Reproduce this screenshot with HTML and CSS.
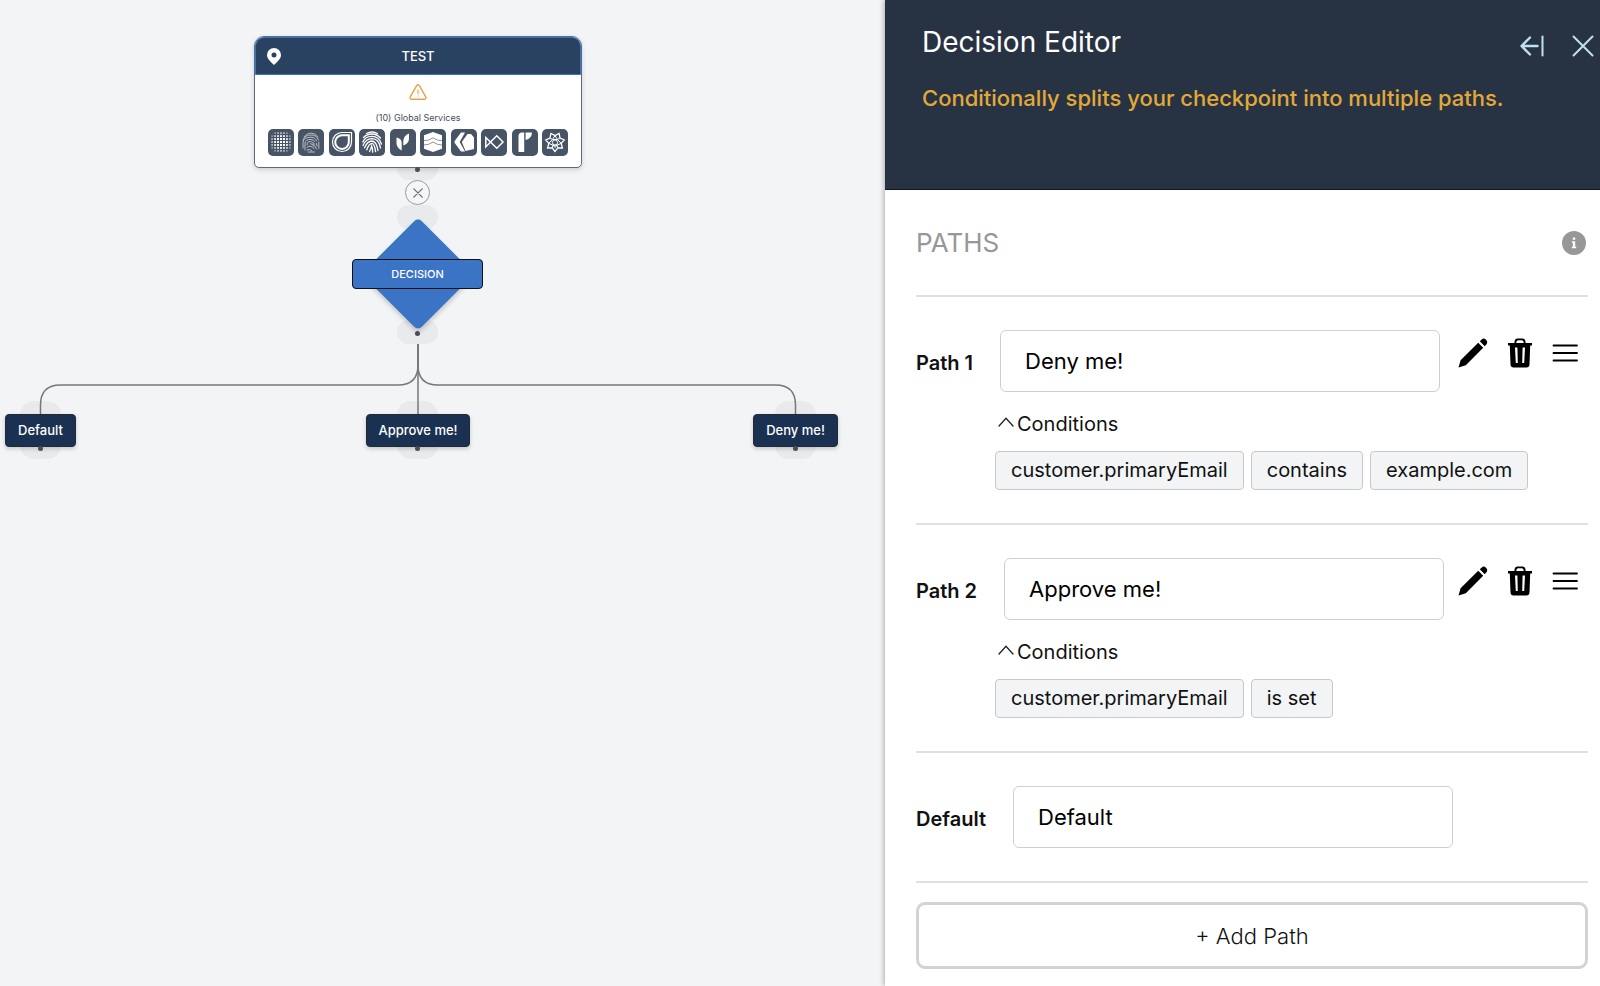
FILE: index.html
```html
<!DOCTYPE html>
<html lang="en">
<head>
<meta charset="utf-8">
<title>Decision Editor</title>
<link rel="stylesheet" href="styles.css">
</head>
<body>
<div class="app">
  <main class="canvas" aria-label="Flow">
    <span class="pad pad-out"></span>
    <span class="pad pad-in"></span>
    <span class="pad pad-split"></span>
    <span class="pad pad-tall pad-left"></span>
    <span class="pad pad-tall pad-mid"></span>
    <span class="pad pad-tall pad-right"></span>

    <svg class="edges" width="885" height="480" viewBox="0 0 885 480" aria-hidden="true">
      <g fill="none" stroke="#75777a" stroke-width="1.5">
        <path d="M418 344V414"/>
        <path d="M418 344V365Q418 385 398 385H60.500Q40.500 385 40.500 405V414"/>
        <path d="M418 344V365Q418 385 438 385H775.500Q795.500 385 795.500 405V414"/>
      </g>
    </svg>

    <section class="checkpoint">
      <header class="checkpoint-head">
        <svg class="pin" width="14" height="17" viewBox="0 0 14 17" aria-hidden="true"><path fill="#fff" fill-rule="evenodd" d="M7 0a7 7 0 0 1 7 7c0 4-4.500 7.500-7 10C4.500 14.500 0 11 0 7a7 7 0 0 1 7-7zm0 4.600a2.500 2.500 0 1 0 0 5 2.500 2.500 0 0 0 0-5z"/></svg>
        <h2 class="checkpoint-title">TEST</h2>
      </header>
      <div class="checkpoint-body">
        <svg width="18" height="16" viewBox="0 0 18 16" fill="none" stroke="#e9a04a" stroke-width="1.400" stroke-linejoin="round" stroke-linecap="round" aria-hidden="true"><path d="M7.800 1.400Q9 .1 10.200 1.400L16.900 13.200Q17.200 15 15.600 15.200H2.400Q.8 15 1.100 13.200Z"/><path d="M9 5.800V9.800M9 11.900V12.100" stroke-width="1.100"/></svg>
        <p class="services-label">(10) Global Services</p>
        <ul class="services">
          <li class="service"><svg viewBox="0 0 26 26"><defs><pattern id="dots" width="3" height="3" patternUnits="userSpaceOnUse" x="3" y="3"><rect width="2" height="2" fill="#fff"/></pattern><radialGradient id="fade"><stop offset=".4" stop-color="#fff"/><stop offset="1" stop-color="#fff" stop-opacity=".15"/></radialGradient><mask id="round"><circle cx="13" cy="13" r="12" fill="url(#fade)"/></mask></defs><rect x="3" y="3" width="20" height="20" fill="url(#dots)" mask="url(#round)"/></svg></li>
          <li class="service"><svg viewBox="0 0 26 26" fill="none" stroke="#c3c9d0" stroke-width=".9" stroke-linecap="round"><path d="M6 8Q9 4 13 4T20 8M5 11Q7 6 13 6T20.500 11M5 19V13Q5.500 8.500 13 8.200Q18 8.500 18.500 12M7 21V14Q7.500 10.400 13 10.400Q16 10.500 16.500 12.500M9.200 16Q8.500 12.600 12.500 12.500Q14 12.600 16.800 15.200M9 18.500Q10 17 12 17.200T16 19.500M9 21Q11 19 14 22M14.500 15Q17 16 18.500 20M20.800 13V19.500M18.500 14.500L19 17M10 23H16.500M12.200 14.500Q13.800 14.700 16 17.200"/></svg></li>
          <li class="service"><svg viewBox="0 0 26 26" fill="none" stroke="#fff"><path stroke-width="1.200" d="M22.500 3.500H13A9.500 9.500 0 1 0 22.500 13Z"/><path stroke-width="2" d="M19.800 6.300H13.200A6.800 6.800 0 1 0 19.800 13Z"/></svg></li>
          <li class="service"><svg viewBox="0 0 26 26" fill="none" stroke="#fff" stroke-width="1.300" stroke-linecap="round"><path d="M7.500 4.500Q13 1.500 18.500 4.500M4.500 8.500Q8 5 13 5T21.500 9M3.800 13Q6 7.300 13 7.300T22.500 15M4 16.500Q7 9.700 13 9.700Q20 9.900 21.500 19M5.500 18.800Q8.500 12 13 12Q17.500 12.300 19 21.500M7.800 20.800Q10 14.500 13 14.400Q15.600 14.800 16.600 22.700M10.500 22.500Q12 20 12.700 17Q13.800 19.500 13.600 23.200"/></svg></li>
          <li class="service"><svg viewBox="0 0 26 26" fill="#fff"><path d="M6.500 8.500Q11.500 9.500 11.700 13.500V21.500Q6.500 18.500 6.500 14ZM19 4.500V9.500Q19 14.500 13.300 16.500V12Q13.500 6.500 19 4.500Z"/></svg></li>
          <li class="service"><svg viewBox="0 0 26 26"><path fill="#fff" d="M13 3L22 6.200V19.800L13 23L4 19.800V6.200Z"/><path fill="none" stroke="#8c959f" stroke-width="1" d="M4 11.500Q9 12 13 8.800Q17 12 22 11.500M4 16Q9 16 13 13Q17 16 22 16"/></svg></li>
          <li class="service"><svg viewBox="0 0 26 26" fill="#fff"><path d="M10 3.500H14L8.700 13L14 22.500H10L3.500 13.800V12.200ZM16.500 5H20L23 8.500V20L14.500 22L10.800 13Z"/></svg></li>
          <li class="service"><svg viewBox="0 0 26 26" fill="none" stroke="#fff" stroke-width="1.500"><path d="M9.500 13L15.800 6.700L22 13L15.800 19.300ZM11.500 15L4.800 8.500V18L11.500 11"/></svg></li>
          <li class="service"><svg viewBox="0 0 26 26" fill="#fff"><path d="M6.500 23V7Q6.500 3.500 10 3.500H12.200V23ZM13.600 3.500H20Q20 9.500 13.600 11Z"/></svg></li>
          <li class="service"><svg viewBox="0 0 26 26" fill="none" stroke="#fff" stroke-width="1"><path stroke-width="1.300" d="M13.000 22.500L10.200 18.800L5.600 19.000L6.800 14.400L3.700 10.900L8.000 9.000L8.900 4.400L13.000 6.600L17.100 4.400L18.000 9.000L22.300 10.900L19.200 14.400L20.400 19.000L15.800 18.800Z"/><path d="M13 6.600L10.500 10.500L8 9M10.500 10.500L6.800 14.400L11 16.200L10.200 18.800M11 16.200L13 18.500L15 16.200L15.800 18.800M15 16.200L19.200 14.400L15.500 10.500L18 9M15.500 10.500L13 6.600M10.500 10.500H15.500M11 16.200H15"/><circle cx="13" cy="13.500" r="2.600"/></svg></li>
        </ul>
      </div>
    </section>
    <span class="dot dot-out"></span>
    <button class="remove" type="button" aria-label="Remove connection"><svg width="10" height="10" viewBox="0 0 10 10" stroke="#66686b" stroke-width="1.200" stroke-linecap="round"><path d="M.8 .8L9.200 9.200M9.200 .8L.8 9.200"/></svg></button>

    <span class="diamond"></span>
    <button class="decision" type="button">DECISION</button>
    <span class="dot dot-split"></span>

    <button class="branch branch-left" type="button">Default</button>
    <button class="branch branch-mid" type="button">Approve me!</button>
    <button class="branch branch-right" type="button">Deny me!</button>
    <span class="dot dot-left"></span>
    <span class="dot dot-mid"></span>
    <span class="dot dot-right"></span>
  </main>

  <aside class="panel">
    <header class="panel-head">
      <div class="panel-bar">
        <h1 class="panel-title">Decision Editor</h1>
        <div class="panel-actions">
          <button class="icon-btn" type="button" aria-label="Expand panel"><svg width="24" height="22" viewBox="0 0 24 22" fill="none" stroke="#bfe0f0" stroke-width="2.400" stroke-linecap="round" stroke-linejoin="round"><path d="M10 2.500L1.500 11L10 19.500M2 11H17.500"/><path d="M22.500 1.500V20.500" stroke-width="2"/></svg></button>
          <button class="icon-btn" type="button" aria-label="Close"><svg width="22" height="22" viewBox="0 0 22 22" stroke="#bfe0f0" stroke-width="2" stroke-linecap="round"><path d="M1.500 1.500L20.500 20.500M20.500 1.500L1.500 20.500"/></svg></button>
        </div>
      </div>
      <p class="panel-sub">Conditionally splits your checkpoint into multiple paths.</p>
    </header>

    <div class="panel-body">
      <div class="section-head">
        <h2 class="section-title">PATHS</h2>
        <button class="icon-btn" type="button" aria-label="About paths"><svg width="24" height="24" viewBox="0 0 24 24"><circle cx="12" cy="12" r="12" fill="#979797"/><path fill="#fff" d="M10.800 6.500H13.200V8.800H10.800ZM9.900 10.300H13.200V15.800H14.200V17.300H9.800V15.800H10.900V11.800H9.900Z"/></svg></button>
      </div>

      <section class="path">
        <div class="path-row">
          <label class="path-label" for="path1">Path 1</label>
          <input class="path-input" id="path1" type="text" value="Deny me!">
          <div class="path-tools">
            <button class="icon-btn" type="button" aria-label="Edit path 1"><svg width="30" height="30" viewBox="0 0 30 30"><path d="M.5 29.500L2.600 22.200L20.200 4.800L25.200 9.800L7.800 27.300ZM21.800 3.300L24 1.200Q26-.2 28 1.800T28.700 6L26.700 8.200Z"/></svg></button>
            <button class="icon-btn" type="button" aria-label="Delete path 1"><svg width="24" height="30" viewBox="0 0 24 30"><path fill-rule="evenodd" d="M6.500 5V3.500Q7 .5 9.500 .5H14.500Q17 .5 17.500 3.500V5H24V7.500H22.200L21.500 26.500Q21.200 29.500 18.500 29.500H5.500Q2.800 29.500 2.500 26.500L1.800 7.500H0V5ZM8.200 5H15.800Q15.600 2.200 14 2.200H10Q8.400 2.200 8.200 5ZM7 9.500L7.800 25H9.800L9.400 9.500ZM14.600 9.500L14.200 25H16.200L17 9.500Z"/></svg></button>
            <button class="icon-btn" type="button" aria-label="Reorder path 1"><svg width="26" height="18" viewBox="0 0 26 18" stroke="#000" stroke-width="1.800" stroke-linecap="round"><path d="M1.500 1.500H25M1.500 9H25M1.500 16.500H25"/></svg></button>
          </div>
        </div>
        <div class="conditions">
          <button class="toggle" type="button"><svg class="caret" width="16" height="10" viewBox="0 0 16 10" fill="none" stroke="#222" stroke-width="1.300" stroke-linecap="round"><path d="M1 9L8 1.200L15 9"/></svg>Conditions</button>
          <ul class="chips"><li class="chip">customer.primaryEmail</li><li class="chip">contains</li><li class="chip">example.com</li></ul>
        </div>
      </section>

      <section class="path">
        <div class="path-row">
          <label class="path-label" for="path2">Path 2</label>
          <input class="path-input" id="path2" type="text" value="Approve me!">
          <div class="path-tools">
            <button class="icon-btn" type="button" aria-label="Edit path 2"><svg width="30" height="30" viewBox="0 0 30 30"><path d="M.5 29.500L2.600 22.200L20.200 4.800L25.200 9.800L7.800 27.300ZM21.800 3.300L24 1.200Q26-.2 28 1.800T28.700 6L26.700 8.200Z"/></svg></button>
            <button class="icon-btn" type="button" aria-label="Delete path 2"><svg width="24" height="30" viewBox="0 0 24 30"><path fill-rule="evenodd" d="M6.500 5V3.500Q7 .5 9.500 .5H14.500Q17 .5 17.500 3.500V5H24V7.500H22.200L21.500 26.500Q21.200 29.500 18.500 29.500H5.500Q2.800 29.500 2.500 26.500L1.800 7.500H0V5ZM8.200 5H15.800Q15.600 2.200 14 2.200H10Q8.400 2.200 8.200 5ZM7 9.500L7.800 25H9.800L9.400 9.500ZM14.600 9.500L14.200 25H16.200L17 9.500Z"/></svg></button>
            <button class="icon-btn" type="button" aria-label="Reorder path 2"><svg width="26" height="18" viewBox="0 0 26 18" stroke="#000" stroke-width="1.800" stroke-linecap="round"><path d="M1.500 1.500H25M1.500 9H25M1.500 16.500H25"/></svg></button>
          </div>
        </div>
        <div class="conditions">
          <button class="toggle" type="button"><svg class="caret" width="16" height="10" viewBox="0 0 16 10" fill="none" stroke="#222" stroke-width="1.300" stroke-linecap="round"><path d="M1 9L8 1.200L15 9"/></svg>Conditions</button>
          <ul class="chips"><li class="chip">customer.primaryEmail</li><li class="chip">is set</li></ul>
        </div>
      </section>

      <section class="path">
        <div class="path-row">
          <label class="path-label" for="path-default">Default</label>
          <input class="path-input" id="path-default" type="text" value="Default">
        </div>
      </section>

      <button class="add-path" type="button">+ Add Path</button>
    </div>
  </aside>
</div>
</body>
</html>
```
FILE: styles.css
```css
*, *::before, *::after { box-sizing: border-box; }

body {
  margin: 0;
  font-family: Inter, "Liberation Sans", sans-serif;
  color: #111;
  background: #f2f4f6;
}

h1, h2, p, ul { margin: 0; padding: 0; font-weight: 400; }
ul { list-style: none; }
button, input { font: inherit; color: inherit; }
button { padding: 0; border: 0; background: none; cursor: pointer; }
svg { display: block; }

.app { display: flex; min-height: 100vh; }

/* Flow canvas: every node has a free position */
.canvas {
  position: relative;
  flex: 885 1 0;
  min-width: 0;
  overflow: hidden;
}

.edges { position: absolute; left: 0; top: 0; }

.pad {
  position: absolute;
  width: 41px;
  height: 24px;
  border-radius: 12px;
  background: #e9eaec;
}
.pad-out { left: 397px; top: 156px; }
.pad-in { left: 397px; top: 205px; }
.pad-split { left: 397px; top: 320px; }
.pad-tall { top: 401px; height: 58px; border-radius: 14px; }
.pad-left { left: 20px; }
.pad-mid { left: 397px; }
.pad-right { left: 775px; }

.dot {
  position: absolute;
  width: 5px;
  height: 5px;
  border-radius: 50%;
  background: #4b4d50;
}
.dot-out { left: 415px; top: 167px; }
.dot-split { left: 415px; top: 331px; }
.dot-left { left: 38px; top: 446px; }
.dot-mid { left: 415px; top: 446px; }
.dot-right { left: 793px; top: 446px; }

.checkpoint {
  position: absolute;
  left: 254px;
  top: 36px;
  width: 328px;
  border: 1px solid #5c6b7e;
  border-radius: 10px 10px 5px 5px;
  background: #fff;
  box-shadow: 0 2px 5px rgba(0, 0, 0, .15);
}
.checkpoint-head {
  display: grid;
  grid-template-columns: 14px 1fr 14px;
  align-items: center;
  height: 38px;
  padding: 0 11px;
  border: 1px solid #3b73c4;
  border-radius: 9px 9px 0 0;
  background: #2a4261;
}
.checkpoint-title {
  color: #fff;
  font-size: 13px;
  font-weight: 500;
  line-height: 16px;
  text-align: center;
}
.checkpoint-body {
  display: flex;
  flex-direction: column;
  align-items: center;
  padding: 9px 13px 11px;
}
.services-label {
  margin-top: 10px;
  font-size: 9px;
  line-height: 16px;
  color: #444e5c;
}
.services {
  display: flex;
  justify-content: space-between;
  width: 100%;
  margin-top: 3px;
}
.service {
  width: 26px;
  height: 27px;
  border-radius: 5px;
  background: #475465;
}

.remove {
  position: absolute;
  left: 405px;
  top: 180px;
  display: grid;
  place-items: center;
  width: 25px;
  height: 25px;
  border: 1px solid #999b9e;
  border-radius: 50%;
  background: #f5f6f7;
}

.diamond {
  position: absolute;
  left: 378px;
  top: 234px;
  width: 80px;
  height: 80px;
  border-radius: 5px;
  background: #3b73c5;
  box-shadow: 2px 2px 5px rgba(0, 0, 0, .2);
  transform: rotate(45deg);
}
.decision {
  position: absolute;
  left: 352px;
  top: 259px;
  width: 131px;
  height: 30px;
  border: 1px solid #111;
  border-radius: 4px;
  background: #3b73c5;
  color: #fff;
  font-size: 11px;
  font-weight: 500;
}

.branch {
  position: absolute;
  top: 414px;
  height: 33px;
  padding-bottom: 2px;
  border: 1px solid #222a35;
  border-radius: 4px;
  background: #1a3152;
  box-shadow: 0 2px 4px rgba(0, 0, 0, .18);
  color: #fff;
  font-size: 13px;
  font-weight: 500;
}
.branch-left { left: 5px; width: 71px; }
.branch-mid { left: 366px; width: 104px; }
.branch-right { left: 753px; width: 85px; }

/* Editor panel */
.panel {
  position: relative;
  flex: 715 1 0;
  min-width: 0;
  background: #fff;
  box-shadow: -1px 0 5px rgba(0, 0, 0, .3);
}
.panel-head {
  min-height: 190px;
  padding: 24px 6px 24px 37px;
  border-bottom: 1px solid #0d1824;
  background: #273343;
}
.panel-bar {
  display: flex;
  align-items: flex-start;
  justify-content: space-between;
}
.panel-title {
  color: #fff;
  font-size: 28px;
  line-height: 36px;
}
.panel-sub {
  margin-top: 20px;
  color: #e3a938;
  font-size: 22px;
  font-weight: 500;
  line-height: 36px;
}
.panel-actions {
  display: flex;
  gap: 28px;
  padding-top: 11px;
}

.panel-body { padding: 0 12px 16px 31px; }
.section-head {
  display: flex;
  align-items: center;
  justify-content: space-between;
  height: 107px;
  padding-right: 2px;
  border-bottom: 2px solid #dddfe1;
}
.section-title { color: #979797; font-size: 26px; }

.path { padding: 33px 0; border-bottom: 2px solid #dddfe1; }
.path-row { display: flex; align-items: flex-start; }
.path-label {
  margin-right: 27px;
  padding-top: 4px;
  font-size: 20px;
  font-weight: 600;
  line-height: 58px;
}
.path-input {
  width: 440px;
  height: 62px;
  padding: 0 24px;
  border: 1px solid #cdcfd6;
  border-radius: 6px;
  background: #fff;
  color: #000;
  font-size: 22px;
}
.path-tools {
  display: flex;
  align-items: center;
  gap: 20px;
  margin-left: auto;
  padding: 8px 10px 0 0;
}

.conditions { padding-left: 79px; }
.toggle {
  display: flex;
  align-items: center;
  gap: 3px;
  margin-top: 18px;
  padding-left: 3px;
  font-size: 20px;
  line-height: 28px;
}
.caret { margin-bottom: 5px; }
.chips { display: flex; flex-wrap: wrap; gap: 7px; margin-top: 13px; }
.chip {
  padding: 0 15px;
  border: 1px solid #c6c8ca;
  border-radius: 4px;
  background: #f2f4f6;
  font-size: 20px;
  line-height: 37px;
}

.add-path {
  width: 100%;
  height: 67px;
  margin-top: 19px;
  border: 3px solid #d3d3d3;
  border-radius: 9px;
  background: #fff;
  font-size: 22px;
  font-weight: 300;
}
```
